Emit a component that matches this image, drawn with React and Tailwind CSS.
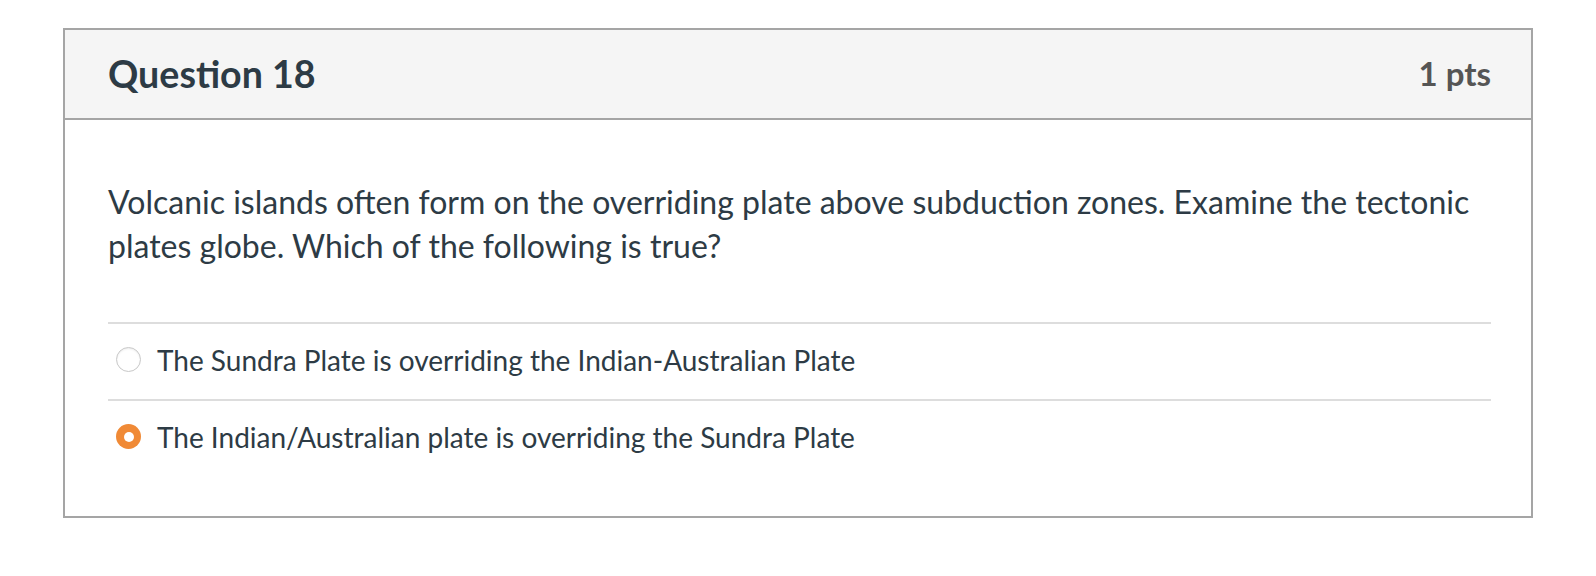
export default function App() {
  const options = [
    { text: "The Sundra Plate is overriding the Indian-Australian Plate", selected: false },
    { text: "The Indian/Australian plate is overriding the Sundra Plate", selected: true },
  ];
  return (
    <div className="w-[1596px] h-[576px] bg-white pt-[28px] pl-[63px]" style={{ fontFamily: "Lato, 'Open Sans', sans-serif" }}>
      <div className="w-[1470px] border-2 border-[#a5a5a5]">
        <div className="h-[90px] bg-[#f5f5f5] border-b-2 border-[#a5a5a5] flex items-center justify-between pl-[43px] pr-[40px]">
          <div className="text-[37.6px] font-bold text-[#2d3b45]">Question 18</div>
          <div className="text-[33px] font-bold text-[#555555]">1 pts</div>
        </div>
        <div className="pl-[43px] pr-[40px] pt-[60px] pb-[40px]">
          <p className="text-[32px] leading-[44px] text-[#2d3b45] mb-[54px]">
            Volcanic islands often form on the overriding plate above subduction zones. Examine the tectonic plates globe. Which of the following is true?
          </p>
          <div>
            {options.map((o, i) => (
              <div key={i} className="border-t-2 border-[#dddddd] h-[77px] pb-[4px] flex items-center">
                {o.selected ? (
                  <div className="w-[25px] h-[25px] rounded-full bg-[#f08a36] flex items-center justify-center ml-[8px] mr-[16px]">
                    <div className="w-[10px] h-[10px] rounded-full bg-white" />
                  </div>
                ) : (
                  <div className="w-[25px] h-[25px] rounded-full border border-[#c8c8c8] bg-white ml-[8px] mr-[16px] shadow-[inset_0_1px_2px_rgba(0,0,0,0.08)]" />
                )}
                <span className="text-[28px] text-[#2d3b45]">{o.text}</span>
              </div>
            ))}
          </div>
        </div>
      </div>
    </div>
  );
}
